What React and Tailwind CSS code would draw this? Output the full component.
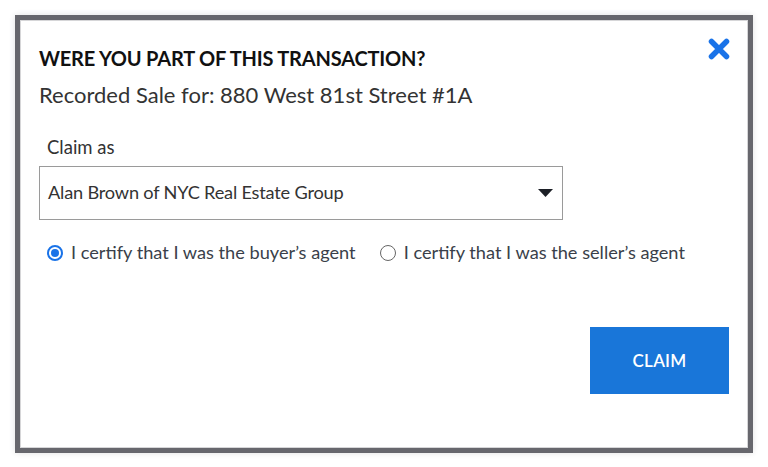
import React, { useState } from 'react';

function Radio({ checked, label, onClick }) {
  return (
    <label className="flex items-center gap-[8px] cursor-pointer" onClick={onClick}>
      <span
        className={`flex h-[16px] w-[16px] items-center justify-center rounded-full border ${
          checked ? 'border-[#1a73e8] border-2' : 'border-[#666]'
        } bg-white`}
      >
        {checked && <span className="h-[8px] w-[8px] rounded-full bg-[#1a73e8]" />}
      </span>
      <span className="text-[18.2px] text-[#3a3f4a]">{label}</span>
    </label>
  );
}

export default function App() {
  const [role, setRole] = useState('buyer');

  return (
    <div className="h-[467px] w-[768px] bg-white p-[15px] font-['Lato',sans-serif]">
      <div className="h-[438px] w-[738px] border-[5px] border-[#67676d] shadow-[0_0_6px_rgba(0,0,0,0.12)]">
        <div className="flex h-full flex-col border border-[#d6d6d8] bg-white px-[18px] pt-[23px] pb-[53px]">
          <div className="flex items-start justify-between">
            <div>
              <h1 className="text-[20px] font-bold leading-[28px] tracking-[-0.2px] text-[#111]">
                WERE YOU PART OF THIS TRANSACTION?
              </h1>
              <p className="mt-[8px] text-[22px] leading-[30px] text-[#333]">
                Recorded Sale for: 880 West 81st Street #1A
              </p>
            </div>
            <button className="mr-[-2px] mt-[-7px] text-[#1a73e8]" aria-label="Close">
              <svg width="24" height="24" viewBox="0 0 24 24">
                <path
                  d="M4.5 4.5 L19.5 19.5 M19.5 4.5 L4.5 19.5"
                  stroke="currentColor"
                  strokeWidth="5.5"
                  strokeLinecap="round"
                />
              </svg>
            </button>
          </div>

          <div className="mt-[25px] pl-[8px] text-[18.5px] leading-[24px] text-[#333]">Claim as</div>
          <div className="mt-[7px] flex h-[54px] w-[524px] items-center justify-between border border-[#9a9a9a] bg-white pl-[8px] pr-[9px]">
            <span className="text-[18.2px] tracking-[-0.2px] text-[#333]">
              Alan Brown of NYC Real Estate Group
            </span>
            <svg width="15" height="9" viewBox="0 0 15 9">
              <path d="M0 0 H15 L7.5 8 Z" fill="#1c1f26" />
            </svg>
          </div>

          <div className="mt-[19px] flex items-center gap-[24px] pl-[8px]">
            <Radio
              checked={role === 'buyer'}
              label="I certify that I was the buyer’s agent"
              onClick={() => setRole('buyer')}
            />
            <Radio
              checked={role === 'seller'}
              label="I certify that I was the seller’s agent"
              onClick={() => setRole('seller')}
            />
          </div>

          <div className="mt-auto flex justify-end">
            <button className="h-[67px] w-[139px] bg-[#1976d9] text-[17px] font-semibold tracking-[0.3px] text-white">
              CLAIM
            </button>
          </div>
        </div>
      </div>
    </div>
  );
}
